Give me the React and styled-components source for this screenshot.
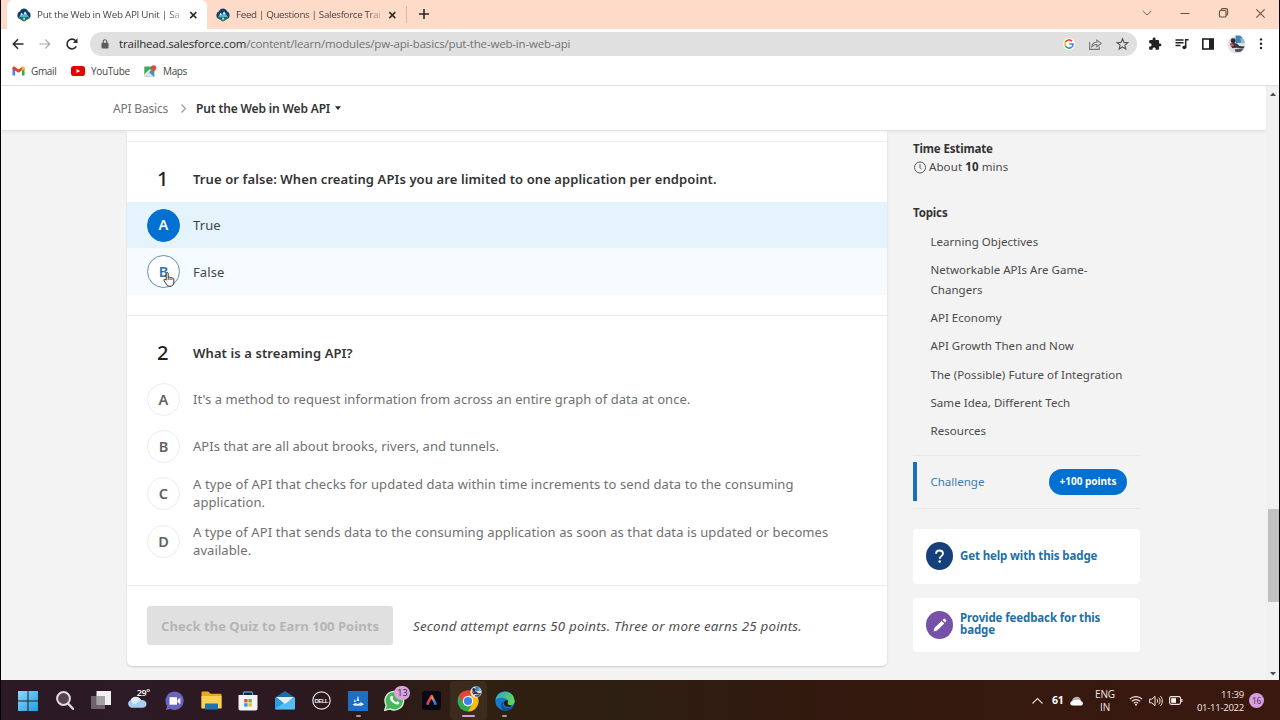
import React from 'react'
import styled, { createGlobalStyle } from 'styled-components'
import { MdExtension } from 'react-icons/md'

const GlobalStyle = createGlobalStyle`
  * { box-sizing: border-box; }
  body { margin: 0; overflow: hidden; font-family: "Noto Sans", sans-serif; }
  svg { display: block; flex: none; overflow: visible; }
`

const Screen = styled.div`
  display: flex;
  flex-direction: column;
  width: 1280px;
  height: 720px;
  background: #000;
`

const Browser = styled.div`
  display: flex;
  flex-direction: column;
  height: 680px;
  margin: 0 1px;
  background: #fff;
  font-family: "Open Sans", sans-serif;
`

/* browser chrome */
const TabStrip = styled.div`
  display: flex;
  height: 29px;
  flex: none;
  background: #fddbc8;
`

const Tab = styled.div`
  display: flex;
  align-items: center;
  width: ${({ $active }) => ($active ? 200 : 199)}px;
  height: 29px;
  padding-left: ${({ $active }) => ($active ? 10 : 9)}px;
  margin-left: ${({ $active }) => ($active ? 6 : 0)}px;
  background: ${({ $active }) => ($active ? '#fff' : 'transparent')};
  border-radius: 6px 6px 0 0;
`

const TabTitle = styled.div`
  width: 146px;
  margin-left: 6px;
  margin-right: 6px;
  overflow: hidden;
  white-space: nowrap;
  font-size: 9.8px;
  line-height: 16px;
  letter-spacing: ${({ $track }) => $track}px;
  color: #4b4340;
  mask-image: linear-gradient(90deg, #000 90%, transparent 102%);
`

const TabDivider = styled.div`
  width: 1px;
  height: 17px;
  margin: 6px 12px 0 0;
  background: #d9b5a4;
`

const NewTab = styled.div`
  padding-top: 9px;
  flex: 1;
`

const WindowButtons = styled.div`
  display: flex;
  align-items: center;
  gap: 28.5px;
  height: 26px;
  padding-right: 14px;
`

const Toolbar = styled.div`
  display: flex;
  align-items: center;
  height: 29px;
  flex: none;
  padding-left: 11px;
  padding-top: 1px;
`

const NavButtons = styled.div`
  display: flex;
  align-items: center;
  gap: 15px;
  width: 78px;
`

const Address = styled.div`
  display: flex;
  align-items: center;
  width: 1047px;
  height: 24px;
  padding: 0 8px 0 10px;
  border-radius: 12px;
  background: #e0e0e0;
`

const Url = styled.div`
  flex: 1;
  margin-left: 9px;
  font-size: 11.5px;
  line-height: 20px;
  letter-spacing: -0.17px;
  color: #727272;
  b { font-weight: 400; color: #2b2b2b; }
`

const AddressIcons = styled.div`
  display: flex;
  align-items: center;
  gap: 14px;
`

const Extensions = styled.div`
  display: flex;
  align-items: center;
  gap: 13px;
  margin-left: 11px;
`

const Bookmarks = styled.div`
  display: flex;
  height: 28px;
  flex: none;
  padding: 4px 0 0 11px;
  border-bottom: 1px solid #dedede;
`

const Bookmark = styled.div`
  display: flex;
  align-items: center;
  height: 17px;
  width: ${({ $w }) => $w}px;
  gap: 6px;
  font-size: 10px;
  letter-spacing: -0.35px;
  color: #444;
`

/* page */
const Page = styled.div`
  display: flex;
  flex: 1;
  min-height: 0;
  font-family: "Noto Sans", sans-serif;
`

const Site = styled.div`
  display: flex;
  flex-direction: column;
  width: 1265px;
  background: #f3f3f3;
`

const Crumbs = styled.div`
  display: flex;
  align-items: center;
  height: 45px;
  flex: none;
  padding-left: 112px;
  background: #fff;
  border-bottom: 1px solid #e2e2e2;
  box-shadow: 0 1px 2px rgba(0, 0, 0, 0.06);
  font-size: 12px;
  z-index: 1;
`

const CrumbLink = styled.span`
  width: 68px;
  letter-spacing: -0.2px;
  color: #747474;
`

const CrumbCurrent = styled.span`
  margin: 0 5px 0 10px;
  font-weight: 600;
  letter-spacing: -0.15px;
  color: #333;
`

const Content = styled.div`
  display: flex;
  flex: 1;
  min-height: 0;
  padding-left: 126px;
`

const Quiz = styled.div`
  width: 760px;
  height: 535px;
  background: #fff;
  border-radius: 0 0 5px 5px;
  box-shadow: 0 1px 2px rgba(0, 0, 0, 0.16);
  letter-spacing: 0.1px;
`

const QuizTop = styled.div`
  height: 11px;
  border-bottom: 1px solid #efefef;
`

const Question = styled.section`
  height: ${({ $h }) => $h}px;
  border-bottom: 1px solid #ebebeb;
`

const QuestionHead = styled.div`
  display: flex;
  align-items: center;
  height: 60px;
  padding-top: 13px;
  font-size: 13px;
  font-weight: 600;
  color: #333;
`

const Num = styled.div`
  width: 66px;
  padding-left: 30px;
  font-size: 20px;
  font-weight: 500;
  line-height: 24px;
  color: #222;
`

const Option = styled.div`
  display: flex;
  align-items: center;
  height: ${({ $h }) => $h || 47}px;
  padding-left: 20px;
  background: ${({ $bg }) => $bg || 'transparent'};
  color: ${({ $bg }) => ($bg ? '#3e464d' : '#707070')};
  font-size: 13px;
  line-height: 17.5px;
  letter-spacing: ${({ $track }) => $track ?? 0.1}px;
`

const OptionText = styled.div`
  padding-top: ${({ $drop }) => ($drop ? 2 : 0)}px;
`

const Letter = styled.div`
  display: flex;
  align-items: center;
  justify-content: center;
  width: 33px;
  height: 33px;
  margin-right: 13px;
  border-radius: 50%;
  border: 1px solid ${({ $state }) => ($state === 'on' ? '#0070d2' : $state === 'hover' ? '#5c91b8' : '#ececec')};
  background: ${({ $state }) => ($state === 'on' ? '#0070d2' : '#fff')};
  color: ${({ $state }) => ($state === 'on' ? '#fff' : $state === 'hover' ? '#2a76b5' : '#626262')};
  font-size: 14.5px;
  font-weight: 600;
  position: relative;
`

const Pointer = styled.div`
  position: absolute;
  left: 15px;
  top: 16px;
`

const QuizFooter = styled.div`
  display: flex;
  align-items: center;
  height: 79px;
  padding-left: 20px;
`

const CheckButton = styled.button`
  width: 246px;
  height: 39px;
  padding: 0;
  border: 0;
  border-radius: 3px;
  background: #e0e0e0;
  color: #b5b5b5;
  font-family: inherit;
  font-size: 13px;
  font-weight: 700;
  letter-spacing: 0.04px;
`

const Note = styled.em`
  margin-left: 20px;
  font-size: 13.3px;
  letter-spacing: 0.23px;
  color: #4f4f4f;
`

const Sidebar = styled.aside`
  width: 227px;
  margin-left: 26px;
  padding-top: 9px;
  font-size: 11.5px;
  color: #4a4a4a;
`

const SideTitle = styled.div`
  line-height: 18px;
  font-weight: 700;
  letter-spacing: -0.15px;
  color: #333;
`

const Estimate = styled.div`
  display: flex;
  align-items: center;
  gap: 3px;
  height: 17px;
  margin-bottom: 29px;
  letter-spacing: 0.1px;
  b { color: #2f2f2f; }
`

const Topics = styled.div`
  display: flex;
  flex-direction: column;
  gap: 8.15px;
  width: 190px;
  margin: 10px 0 0 17.5px;
  line-height: 20px;
`

const Topic = styled.div`
  letter-spacing: 0.04px;
  white-space: ${({ $wrap }) => ($wrap ? 'normal' : 'nowrap')};
`

const Challenge = styled.div`
  display: flex;
  align-items: center;
  height: 54px;
  margin-top: 14px;
  border-top: 1px solid #e8e8e8;
  border-bottom: 1px solid #e8e8e8;
  color: #3b7cb4;
`

const ActiveBar = styled.div`
  width: 4px;
  height: 39px;
  margin-right: 13.5px;
  background: #1a6fb8;
`

const Points = styled.div`
  margin-left: auto;
  margin-right: 13px;
  width: 78px;
  height: 26px;
  border-radius: 13px;
  background: #0070d2;
  color: #fff;
  font-size: 10px;
  font-weight: 700;
  line-height: 25px;
  text-align: center;
`

const HelpCard = styled.div`
  display: flex;
  align-items: center;
  width: 227px;
  height: ${({ $h }) => $h}px;
  margin-top: ${({ $mt }) => $mt}px;
  padding: 0 20px 0 13px;
  border-radius: 4px;
  background: #fff;
  color: #1f6fa8;
  font-weight: 700;
  line-height: 12px;
  letter-spacing: -0.12px;
`

const HelpText = styled.div`
  width: 155px;
  margin-left: 7px;
  padding-bottom: 1px;
`

const ScrollTrack = styled.div`
  display: flex;
  flex-direction: column;
  align-items: center;
  width: 13px;
  padding: 6px 0 4px;
  background: #f1f1f1;
`

const ScrollThumb = styled.div`
  width: 11px;
  height: 93px;
  margin: 413px 0 auto 2px;
  background: #c1c1c1;
`

/* taskbar */
const Taskbar = styled.div`
  display: flex;
  align-items: center;
  height: 40px;
  margin-left: 1px;
  padding-top: 1px;
  background: linear-gradient(90deg, #2b1a26 0%, #2c1922 20%, #2d1a1a 30%, #302011 38%, #2d1e12 48%, #33190f 65%, #3a1810 100%);
  color: #f3e6e2;
  font-family: "Open Sans", sans-serif;
`

const Pinned = styled.div`
  display: grid;
  grid-template-columns: repeat(14, 36.7px);
  margin-left: 8.6px;
  height: 39px;
`

const PinnedApp = styled.div`
  display: flex;
  align-items: center;
  justify-content: center;
  position: relative;
  border-radius: 4px;
  background: ${({ $active }) => ($active ? 'rgba(255, 230, 210, 0.06)' : 'none')};
`

const Running = styled.i`
  position: absolute;
  bottom: 3px;
  width: ${({ $wide }) => ($wide ? 13 : 5)}px;
  height: 2.5px;
  border-radius: 2px;
  background: ${({ $wide }) => ($wide ? '#d9a0d6' : '#a39a95')};
`

const Badge = styled.span`
  position: absolute;
  left: 18px;
  top: 5px;
  width: 16px;
  height: 14px;
  border-radius: 8px;
  background: #d9a3dc;
  color: #3b2140;
  font-size: 9px;
  line-height: 14px;
  text-align: center;
`

const Overlay = styled.div`
  position: absolute;
  left: 20px;
  top: 5px;
`

const Degrees = styled.span`
  position: absolute;
  left: 17px;
  top: 6px;
  font-size: 9px;
  font-weight: 600;
  line-height: 12px;
  letter-spacing: -0.3px;
  color: #fff;
`

const Tray = styled.div`
  display: flex;
  align-items: center;
  margin-left: auto;
  padding-right: 16px;
  font-size: 10px;
  line-height: 13px;
  white-space: nowrap;
`

const TrayTemp = styled.span`
  width: 13px;
  margin: 0 5px 0 9px;
  font-size: 10.5px;
  font-weight: 700;
  letter-spacing: -0.3px;
  color: #fff;
`

const Lang = styled.div`
  width: 22px;
  margin: 0 13px 0 11px;
  text-align: center;
  letter-spacing: -0.1px;
`

const TrayIcons = styled.div`
  display: flex;
  align-items: center;
  gap: 6px;
`

const Clock = styled.div`
  width: 50px;
  margin: 0 5px 0 11px;
  text-align: right;
  font-size: 9.6px;
  letter-spacing: -0.3px;
`

const TrayBadge = styled.span`
  width: 15px;
  height: 15px;
  border-radius: 50%;
  background: #d79fe0;
  color: #4b2853;
  font-size: 8.5px;
  line-height: 15px;
  text-align: center;
  letter-spacing: -0.3px;
`

const TrailheadIcon = () => (
  <svg width="14" height="14" viewBox="0 0 14 14">
    <path d="M7 .6c2 0 3.300 1 3.900 2.600 1.700.7 2.700 2.200 2.700 4.200 0 2-.9 3.100-2.600 3.600L7 13.400 3 11C1.300 10.500.4 9.400.4 7.400c0-2 1-3.500 2.700-4.200C3.700 1.600 5 .6 7 .6z" fill="#123f63" />
    <path d="M2 9.200l2.600-4.400 1.600 2L8 3.400l4.200 5.800z" fill="#55b1d6" />
    <path d="M4.600 4.800l1.200 1.800-1.200.7-1-.7zM8 3.400l1.600 2.300-1.500.8-1.300-.9z" fill="#d8f1fb" />
    <path d="M1.200 9.300h11.600c-.5 1-1.200 1.500-2 1.700L7 13.200 3.200 11c-.9-.2-1.600-.8-2-1.700z" fill="#1f7a55" />
    <path d="M6.300 10.400l.7-1.400.8 1.400-.7 2.300z" fill="#e8f6ee" />
  </svg>
)

const CloseIcon = () => (
  <svg width="8" height="8" viewBox="0 0 8 8" stroke="#2d2724" strokeWidth="1.500">
    <path d="M1.300 1.100l6 6M7.300 1.100l-6 6" />
  </svg>
)

const AvatarIcon = ({ size = 19 }) => (
  <svg width={size} height={size} viewBox="0 0 20 20">
    <circle cx="10" cy="10" r="9.500" fill="#dfe3e8" />
    <path d="M9 .6h5l2 2V8l-7 1z" fill="#3f87b8" />
    <path d="M14 3l3.500 1.500L19 8l-4 1z" fill="#8fb9d4" />
    <circle cx="6.500" cy="6" r="2.600" fill="#2b2a30" />
    <path d="M3 9.500l3-1.500 5 1.500 2 2 5.500.500-1 2-8-.5-4 .5z" fill="#3a3340" />
    <path d="M3 9.500l3-.5 1.500 2-3 1.500z" fill="#c0605c" />
    <path d="M8 15l8-1 1.500.8L14 18H9z" fill="#55565f" />
  </svg>
)

const ChromeIcon = () => (
  <svg width="22" height="22" viewBox="0 0 22 22">
    <circle cx="11" cy="11" r="10.500" fill="#33a852" />
    <path d="M1.900 5.700A10.500 10.500 0 0 1 20.100 5.700H11l-4.500 7.800z" fill="#ea4335" />
    <path d="M20.100 5.700A10.500 10.500 0 0 1 11 21.500l4.600-7.900L11 5.700z" fill="#fbbc05" />
    <circle cx="11" cy="11" r="5.200" fill="#fff" />
    <circle cx="11" cy="11" r="4.100" fill="#3f82ee" />
  </svg>
)

const tabs = [
  { title: 'Put the Web in Web API Unit | Sa', track: -0.25, active: true },
  { title: 'Feed | Questions | Salesforce Trai', track: -0.34 },
]

const options = [
  { h: 47, track: 0.05, letter: 'A', text: ["It's a method to request information from across an entire graph of data at once."] },
  { h: 47, track: 0.04, letter: 'B', text: ['APIs that are all about brooks, rivers, and tunnels.'] },
  { h: 47, letter: 'C', text: ['A type of API that checks for updated data within time increments to send data to the consuming', 'application.'] },
  { h: 49, track: 0.09, letter: 'D', text: ['A type of API that sends data to the consuming application as soon as that data is updated or becomes', 'available.'] },
]

const topics = [
  'Learning Objectives',
  'Networkable APIs Are Game-Changers',
  'API Economy',
  'API Growth Then and Now',
  'The (Possible) Future of Integration',
  'Same Idea, Different Tech',
  'Resources',
]

const Chrome = () => (
  <>
    <TabStrip>
      {tabs.map(t => (
        <Tab key={t.title} $active={t.active}>
          <TrailheadIcon />
          <TabTitle $track={t.track}>{t.title}</TabTitle>
          <CloseIcon />
        </Tab>
      ))}
      <TabDivider />
      <NewTab>
        <svg width="10" height="10" viewBox="0 0 10 10" stroke="#2d2724" strokeWidth="1.600"><path d="M5 0v10M0 5h10" /></svg>
      </NewTab>
      <WindowButtons>
        <svg width="10" height="10" viewBox="0 0 10 10" fill="none" stroke="#7a5f52"><path d="M.8 3L5 7l4.200-4" /></svg>
        <svg width="10" height="10" viewBox="0 0 10 10" stroke="#6b4f43"><path d="M.5 5.500h9" /></svg>
        <svg width="9" height="10" viewBox="0 0 9 10" fill="none" stroke="#6b4f43" strokeWidth="1.100">
          <rect x=".5" y="2.500" width="6.500" height="6.500" rx="1" />
          <path d="M2.300 2.500V1.600c0-.6.4-1 1-1h3.600c1 0 1.700.7 1.700 1.700v3.800c0 .6-.4 1-1 1H7" />
        </svg>
        <svg width="9" height="9" viewBox="0 0 9 9" stroke="#6b4f43" strokeWidth="1.100"><path d="M.4.4l8.200 8.200M8.600.4L.4 8.600" /></svg>
      </WindowButtons>
    </TabStrip>
    <Toolbar>
      <NavButtons>
        <svg width="12" height="12" viewBox="0 0 12 12" fill="none" stroke="#2a2a2a" strokeWidth="1.500"><path d="M11.500 6H1.500M6 1.300L1.300 6 6 10.700" /></svg>
        <svg width="12" height="12" viewBox="0 0 12 12" fill="none" stroke="#a6a6a6" strokeWidth="1.200"><path d="M.5 6h10M6 1.300L10.700 6 6 10.700" /></svg>
        <svg width="12" height="12" viewBox="0 0 12 12" fill="none" stroke="#2a2a2a" strokeWidth="1.600">
          <path d="M10.300 8.400A4.900 4.900 0 1 1 9.700 2.800" />
          <path d="M11.500.300v4.700H6.800z" fill="#2a2a2a" stroke="none" />
        </svg>
      </NavButtons>
      <Address>
        <svg width="10" height="10" viewBox="0 0 10 10">
          <rect x="1.500" y="3.700" width="7" height="5.800" rx=".8" fill="#5c5c5c" />
          <path d="M3.200 4V2.600a1.800 1.800 0 0 1 3.600 0V4" fill="none" stroke="#5c5c5c" strokeWidth="1.100" />
        </svg>
        <Url><b>trailhead.salesforce.com</b>/content/learn/modules/pw-api-basics/put-the-web-in-web-api</Url>
        <AddressIcons>
          <svg width="12" height="12" viewBox="0 0 12 12">
            <circle cx="6" cy="6" r="6" fill="#fff" />
            <g fill="none" strokeWidth="1.600">
              <path d="M9 3.200A4.100 4.100 0 0 0 2.400 4.100" stroke="#ea4335" />
              <path d="M2.400 4.100a4.100 4.100 0 0 0 0 3.800" stroke="#fbbc05" />
              <path d="M2.400 7.900a4.100 4.100 0 0 0 6.300 1.200" stroke="#34a853" />
              <path d="M8.700 9.100A4 4 0 0 0 10.100 6H6.200" stroke="#4285f4" />
            </g>
          </svg>
          <svg width="13" height="12" viewBox="0 0 13 12" fill="none" stroke="#777" strokeWidth="1.100">
            <path d="M.6 4v7.400h9.600V8.800" />
            <path d="M2.800 8.600c.4-2.700 2.100-4.200 5-4.300V2l4.400 3.400-4.400 3.300V6.500c-2.100 0-3.600.6-5 2.100z" />
          </svg>
          <svg width="13" height="12" viewBox="0 0 13 12" fill="none" stroke="#555" strokeWidth="1.100">
            <path d="M6.500.8l1.500 3.600 3.900.3-3 2.500.9 3.800-3.300-2-3.300 2 .9-3.800-3-2.500 3.900-.3z" />
          </svg>
        </AddressIcons>
      </Address>
      <Extensions>
        <MdExtension size={14} color="#222" />
        <svg width="14" height="12" viewBox="0 0 14 12" stroke="#222" strokeWidth="1.500" fill="none">
          <path d="M.5 2h8M.5 4.700h8M.5 7.400h5M10.700 9.500V1.800H13.600" />
          <circle cx="9.300" cy="9.300" r="1.900" fill="#222" stroke="none" />
        </svg>
        <svg width="12" height="12" viewBox="0 0 12 12"><rect x=".8" y="1" width="10.400" height="10" fill="none" stroke="#222" strokeWidth="1.600" /><path d="M7 1h4v10H7z" fill="#222" /></svg>
        <AvatarIcon />
        <svg width="4" height="14" viewBox="0 0 4 14" fill="#222"><circle cx="2" cy="2.400" r="1.200" /><circle cx="2" cy="6.700" r="1.200" /><circle cx="2" cy="11" r="1.200" /></svg>
      </Extensions>
    </Toolbar>
    <Bookmarks>
      <Bookmark $w={59}>
        <svg width="13" height="10" viewBox="0 0 13 10">
          <path d="M.5 1.500v8h2.600V4z" fill="#4285f4" /><path d="M9.900 4v5.500h2.600v-8z" fill="#34a853" />
          <path d="M.5 2.500C.5.600 2 .2 3.100 1l3.400 2.600L9.900 1v3.200L6.500 6.800.5 3z" fill="#e0402f" />
          <path d="M9.900 1c1.200-.8 2.600-.3 2.600 1.300v1L9.900 5z" fill="#fbbc04" />
        </svg>
        Gmail
      </Bookmark>
      <Bookmark $w={73}>
        <svg width="14" height="10" viewBox="0 0 14 10"><rect width="14" height="10" rx="2.800" fill="#e80000" /><path d="M5.500 2.900v4.200L9.200 5z" fill="#fff" /></svg>
        YouTube
      </Bookmark>
      <Bookmark $w={60}>
        <svg width="13" height="12" viewBox="0 0 13 12">
          <path d="M.3 1.500h10v10H.3z" fill="#3da75a" />
          <path d="M1.300 11.500L6 6.500l4.300 5z" fill="#dfe6ea" /><path d="M6.300 6l4 4v1.500H9.600L5 7.200z" fill="#4285f4" />
          <path d="M.3 9.500l5.500-5.500 1.200 1.200L1.500 11.500H.3z" fill="#e9eee4" />
          <path d="M9.600.2c1.800 0 2.800 1.200 2.800 2.600 0 1.800-2 2.600-2.600 4.700C9.200 5.400 7 4.600 7 2.800 7 1.400 8 .2 9.600.2z" fill="#dd4b3e" />
        </svg>
        Maps
      </Bookmark>
    </Bookmarks>
  </>
)

const App = () => {
  return (
    <Screen>
      <GlobalStyle />
      <Browser>
        <Chrome />
        <Page>
          <Site>
            <Crumbs>
              <CrumbLink>API Basics</CrumbLink>
              <svg width="5" height="9" viewBox="0 0 5 9" fill="none" stroke="#9a9a9a" strokeWidth="1.200"><path d="M.5.500l4 4-4 4" /></svg>
              <CrumbCurrent>Put the Web in Web API</CrumbCurrent>
              <svg width="6" height="4" viewBox="0 0 6 4"><path d="M0 .300h6L3 4z" fill="#2b2b2b" /></svg>
            </Crumbs>
            <Content>
              <Quiz>
                <QuizTop />
                <Question $h={174}>
                  <QuestionHead><Num>1</Num>True or false: When creating APIs you are limited to one application per endpoint.</QuestionHead>
                  <Option $bg="#e5f3fd" $h={46}><Letter $state="on">A</Letter><OptionText $drop>True</OptionText></Option>
                  <Option $bg="#f5fbff" $h={47}>
                    <Letter $state="hover">
                      B
                      <Pointer>
                        <svg width="12" height="15" viewBox="0 0 12 15">
                          <path d="M3.200 8.200V1.700c0-1.500 2-1.500 2 0v3.600c.5-.7 1.700-.5 1.900.4.500-.6 1.600-.4 1.800.5.700-.5 1.900-.1 1.900.9v3c0 2.600-1.300 4.200-3.800 4.200-1.900 0-2.900-.8-3.700-2.300L1 8.700c-.6-1.200.7-2 1.400-1.200z" fill="#fff" stroke="#222" strokeWidth=".9" />
                          <path d="M5.200 5v3M7.100 6v2M8.900 6.500V8" stroke="#222" strokeWidth=".8" />
                        </svg>
                      </Pointer>
                    </Letter>
                    <OptionText $drop>False</OptionText>
                  </Option>
                </Question>
                <Question $h={270}>
                  <QuestionHead><Num>2</Num>What is a streaming API?</QuestionHead>
                  {options.map(o => (
                    <Option key={o.letter} $h={o.h} $track={o.track}>
                      <Letter>{o.letter}</Letter>
                      <OptionText>{o.text.map(line => <div key={line}>{line}</div>)}</OptionText>
                    </Option>
                  ))}
                </Question>
                <QuizFooter>
                  <CheckButton>Check the Quiz to Earn 100 Points</CheckButton>
                  <Note>Second attempt earns 50 points. Three or more earns 25 points.</Note>
                </QuizFooter>
              </Quiz>
              <Sidebar>
                <SideTitle>Time Estimate</SideTitle>
                <Estimate>
                  <svg width="13" height="13" viewBox="0 0 13 13" fill="none" stroke="#555"><circle cx="7" cy="7.500" r="5.500" /><path d="M7 4.300v3.200l1.500 1.800" /></svg>
                  <span>About <b>10</b> mins</span>
                </Estimate>
                <SideTitle>Topics</SideTitle>
                <Topics>
                  {topics.map(t => <Topic key={t} $wrap={t.includes('Game-')}>{t}</Topic>)}
                </Topics>
                <Challenge>
                  <ActiveBar />
                  Challenge
                  <Points>+100 points</Points>
                </Challenge>
                <HelpCard $h={55} $mt={20}>
                  <svg width="27" height="28" viewBox="0 0 27 28">
                    <ellipse cx="13.500" cy="14" rx="13.500" ry="14" fill="#16407c" />
                    <path d="M10 11.700c.1-2 1.500-3.200 3.500-3.200s3.500 1.200 3.500 3c0 2.600-3.300 2.600-3.300 5.200" fill="none" stroke="#fff" strokeWidth="1.800" />
                    <circle cx="13.700" cy="19.500" r="1.200" fill="#fff" />
                  </svg>
                  <HelpText>Get help with this badge</HelpText>
                </HelpCard>
                <HelpCard $h={54} $mt={14}>
                  <svg width="27" height="28" viewBox="0 0 27 28">
                    <ellipse cx="13.500" cy="14" rx="13.500" ry="14" fill="#7552a8" />
                    <path d="M7.500 20.500l.9-3.600 7.200-7 2.700 2.700-7.200 7zM16.500 9l1.200-1.100c.4-.4.8-.4 1.200 0l1.200 1.200c.4.4.4.800 0 1.200l-1 1.200z" fill="#fff" />
                  </svg>
                  <HelpText>Provide feedback for this badge</HelpText>
                </HelpCard>
              </Sidebar>
            </Content>
          </Site>
          <ScrollTrack>
            <svg width="6" height="4" viewBox="0 0 6 4"><path d="M0 4h6L3 .5z" fill="#505050" /></svg>
            <ScrollThumb />
            <svg width="6" height="4" viewBox="0 0 6 4"><path d="M0 0h6L3 3.500z" fill="#505050" /></svg>
          </ScrollTrack>
        </Page>
      </Browser>
      <Taskbar>
        <Pinned>
          <PinnedApp>
            <svg width="20" height="20" viewBox="0 0 20 20">
              <defs><linearGradient id="win" x1="0" y1="0" x2="1" y2="1"><stop offset="0" stopColor="#8adcf8" /><stop offset="1" stopColor="#1f9be6" /></linearGradient></defs>
              <path d="M0 0h9.500v9.500H0zM10.500 0H20v9.500h-9.500zM0 10.500h9.500V20H0zM10.500 10.500H20V20h-9.500z" fill="url(#win)" />
            </svg>
          </PinnedApp>
          <PinnedApp>
            <svg width="18" height="19" viewBox="0 0 18 19"><circle cx="7.500" cy="7.500" r="6.400" fill="#57464f" stroke="#e4dbe0" strokeWidth="2" /><path d="M12 12.500l5 5.300" stroke="#e4dbe0" strokeWidth="2.400" strokeLinecap="round" /></svg>
          </PinnedApp>
          <PinnedApp>
            <svg width="20" height="19" viewBox="0 0 20 19"><path d="M5.500 0H20v14H5.500z" fill="#f1efef" /><path d="M0 5h14v13H0z" fill="#797276" fillOpacity=".85" /><path d="M5.500 5H14v9H5.500z" fill="#a5a0a2" /></svg>
          </PinnedApp>
          <PinnedApp>
            <svg width="24" height="18" viewBox="0 0 24 18"><path d="M5 15.800a4 4 0 0 1-.3-7.600A6 6 0 0 1 15 8c3.500-.3 5.500 1.600 5.500 3.900 0 2.300-1.600 3.900-4 3.900z" fill="#a9cdf0" /><path d="M4.500 8.300A5.800 5.800 0 0 1 15 8l-7 4.500z" fill="#dcebfa" /></svg>
            <Degrees>29°</Degrees>
          </PinnedApp>
          <PinnedApp>
            <svg width="19" height="20" viewBox="0 0 19 20"><path d="M9.500.5a9.200 9.200 0 1 1-4.200 17.400L1 19l1-4.200A9.300 9.300 0 0 1 9.500.5z" fill="#6c63bd" /><path d="M4.500 6.200H12v7.500H4.500z" fill="#fff" /><path d="M12.500 9l2.800-2.300v6.500L12.500 11z" fill="#fff" /></svg>
          </PinnedApp>
          <PinnedApp>
            <svg width="21" height="19" viewBox="0 0 21 19"><path d="M.5 1.500c0-.6.4-1 1-1h5.800l2.200 2.200h10c.6 0 1 .4 1 1V17H.5z" fill="#e8a822" /><path d="M.5 5h20v12.500H.5z" fill="#fbd054" /><path d="M4 13.500c0-.6.4-1 1-1h11c.6 0 1 .4 1 1v5H4z" fill="#1c75ae" /></svg>
          </PinnedApp>
          <PinnedApp>
            <svg width="20" height="20" viewBox="0 0 20 20">
              <path d="M5.500 4V2.200c0-.7.5-1.200 1.200-1.200h6.600c.7 0 1.200.5 1.200 1.200V4" fill="none" stroke="#3d9fd8" strokeWidth="1.400" />
              <path d="M.5 4h19v13.500c0 1.200-.8 2-2 2h-15c-1.200 0-2-.8-2-2z" fill="#f2f4f7" />
              <path d="M6.200 8h3.400v3.400H6.200z" fill="#e0573a" /><path d="M10.400 8h3.400v3.400h-3.400z" fill="#78b13f" /><path d="M6.200 12.200h3.400v3.400H6.200z" fill="#2e9adf" /><path d="M10.400 12.200h3.400v3.400h-3.400z" fill="#f3b729" />
            </svg>
          </PinnedApp>
          <PinnedApp>
            <svg width="20" height="19" viewBox="0 0 20 19"><path d="M0 6.500L10 0l10 6.500V18H0z" fill="#1f6aa8" /><path d="M0 6.500l10 6 10-6v11c0 .8-.4 1.200-1.200 1.200H1.200c-.8 0-1.200-.4-1.200-1.200z" fill="#2f9bdc" /><path d="M0 18l9-6.200 11-5.300V18z" fill="#54bdf0" /><path d="M1 6h18l-9 7z" fill="#e4f1f9" /></svg>
          </PinnedApp>
          <PinnedApp>
            <svg width="19" height="19" viewBox="0 0 19 19"><circle cx="9.500" cy="9.500" r="8.700" fill="none" stroke="#e8e2df" strokeWidth="1.200" /><text x="9.500" y="11.700" fontSize="6" fontWeight="700" textAnchor="middle" fill="#f3eeec" fontFamily="Liberation Sans, sans-serif" textLength="14">DELL</text></svg>
          </PinnedApp>
          <PinnedApp>
            <svg width="20" height="20" viewBox="0 0 20 20"><path d="M0 0h20v20H0z" fill="#1f6fc0" /><path d="M10 4.500l1.200 5.500H8.500zM6.800 8l1.200 3H5.800zM4.500 13.500l3-1.500 2.500 1 3-1.700 3 1.900-2.500 1.500h-7z" fill="#dff0fb" /></svg>
            <Running />
          </PinnedApp>
          <PinnedApp>
            <svg width="21" height="21" viewBox="0 0 21 21"><path d="M.8 20.300l1.400-5a9.300 9.300 0 1 1 3.700 3.600z" fill="#45b955" stroke="#e9f5e9" strokeWidth="1.300" /><path d="M7.500 5.800c.9-.6 1.400.8 1.700 1.800.2.700-.9 1-.6 1.500.8 1.500 2 2.400 3.400 3 .6.200.9-1.100 1.500-.9 1 .3 2.300.9 1.900 1.700-.6 1.800-2.700 1.900-4.800.9-2.300-1-4.600-3.400-4.800-5.800 0-.9.800-1.700 1.700-2.200z" fill="#fff" /></svg>
            <Badge>13</Badge>
          </PinnedApp>
          <PinnedApp>
            <svg width="19" height="19" viewBox="0 0 19 19">
              <defs><linearGradient id="cc" x1="0" y1="0" x2="1" y2=".3"><stop offset="0" stopColor="#e23bd0" /><stop offset=".35" stopColor="#f0433a" /><stop offset=".6" stopColor="#f59a2e" /><stop offset="1" stopColor="#3e7bf0" /></linearGradient></defs>
              <rect width="19" height="19" rx="3" fill="#070814" /><path d="M5.800 13.800V12l3.700-7 3.700 7v1.800" fill="none" stroke="url(#cc)" strokeWidth="2.600" strokeLinejoin="round" />
            </svg>
          </PinnedApp>
          <PinnedApp $active>
            <ChromeIcon />
            <Overlay><AvatarIcon size={12} /></Overlay>
            <Running $wide />
          </PinnedApp>
          <PinnedApp>
            <svg width="20" height="20" viewBox="0 0 20 20">
              <defs><linearGradient id="edge" x1="0" y1="0" x2="1" y2=".3"><stop offset="0" stopColor="#2aa5d8" /><stop offset="1" stopColor="#62d25a" /></linearGradient></defs>
              <circle cx="10" cy="10" r="9.700" fill="#1779cc" />
              <path d="M.4 9A9.700 9.700 0 0 1 19.700 10c0 2.600-1.700 4.200-4.300 4.200-2 0-3.300-.8-2.700-1.900.4-.8.6-1.200.4-2.200C12.400 7.200 5 4.600.4 9z" fill="url(#edge)" />
              <path d="M8 10.500c-1.500 4 2.500 8 9 5.800.7-.2 1 0 .6.500A9.700 9.700 0 0 1 10 19.700c-4-1-5.500-6.500-2-9.200z" fill="#124f96" />
              <path d="M13 9.800c.3 1.300-.5 1.800-.5 2.700 0 1 1.500 1.900 4 1.600l-.4 1.500c-4 1.500-7.500-1-7.500-3.500 0-2.200 3.500-3.600 4.400-2.300z" fill="#2a1b12" />
            </svg>
            <Running />
          </PinnedApp>
        </Pinned>
        <Tray>
          <svg width="11" height="6" viewBox="0 0 11 6" fill="none" stroke="#e8d7d1" strokeWidth="1.100"><path d="M.5 5.500l5-5 5 5" /></svg>
          <TrayTemp>61</TrayTemp>
          <svg width="13" height="10" viewBox="0 0 13 10"><path d="M2 5c.5-3 3-4.300 5-4.200C9 .9 10.500 2 11 4.500z" fill="#b5aeab" /><path d="M3 9.500C1.300 9.500.3 8.500.3 7.200.3 5.900 1.400 5 2.700 5c.8-1.200 2.300-1.600 3.600-1 .8-.5 4.500-.5 4.800 1.200 1.200.2 1.800 1 1.800 2 0 1.400-.9 2.300-2.200 2.300z" fill="#fff" /></svg>
          <Lang>ENG<br />IN</Lang>
          <TrayIcons>
            <svg width="14" height="11" viewBox="0 0 14 11" fill="none" stroke="#f3e6e2" strokeWidth="1.100"><path d="M.8 4.200a8.700 8.700 0 0 1 12.400 0M2.800 6.300a6 6 0 0 1 8.400 0M4.800 8.300a3.200 3.200 0 0 1 4.400 0" /><circle cx="7" cy="9.800" r="1" fill="#f3e6e2" stroke="none" /></svg>
            <svg width="14" height="12" viewBox="0 0 14 12" fill="none" stroke="#f3e6e2"><path d="M.6 4.200h2.200L6 1.400v9.200L2.800 7.800H.6zM8 4.200c.9 1 .9 2.600 0 3.600M9.800 2.700c1.700 1.800 1.700 4.800 0 6.600M11.500 1.200c2.400 2.600 2.400 7 0 9.600" /></svg>
            <svg width="14" height="9" viewBox="0 0 14 9"><rect x=".6" y=".6" width="11" height="7.800" rx="1.800" fill="none" stroke="#f3e6e2" strokeWidth="1.100" /><path d="M2.200 2.200H7v4.600H2.200z" fill="#fff" /><path d="M12.300 3h1.200v3h-1.200z" fill="#f3e6e2" /></svg>
          </TrayIcons>
          <Clock>11:39<br />01-11-2022</Clock>
          <TrayBadge>16</TrayBadge>
        </Tray>
      </Taskbar>
    </Screen>
  )
}

export default App
